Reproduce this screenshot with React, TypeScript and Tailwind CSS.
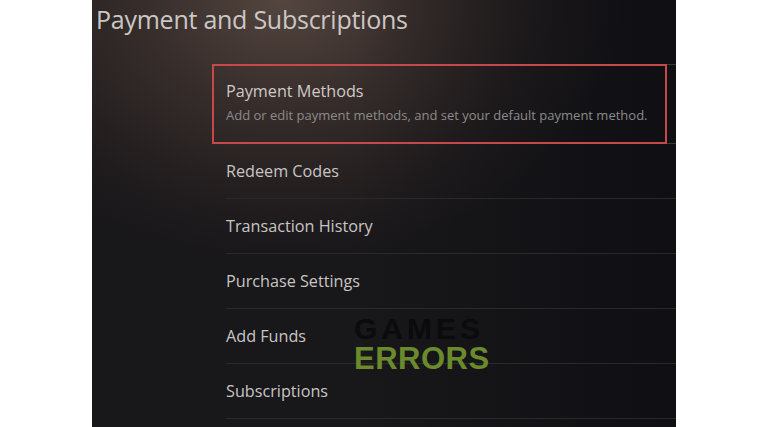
import React from "react";

const rows = ["Redeem Codes", "Transaction History", "Purchase Settings", "Add Funds", "Subscriptions"];

export default function App() {
  return (
    <div className="w-[768px] h-[427px] bg-white flex overflow-hidden" style={{ fontFamily: '"Open Sans", "Noto Sans", sans-serif' }}>
      <div className="ml-[92px] w-[584px] h-[427px] relative overflow-hidden bg-[radial-gradient(ellipse_340px_260px_at_190px_0px,#54453f_0%,#3a302d_35%,#231e1f_75%,#18171a_100%)]">
        <div className="absolute inset-0 bg-[linear-gradient(90deg,rgba(0,0,0,0)_0%,rgba(0,0,0,0)_45%,rgba(8,9,14,0.55)_100%)]" />
        <div className="relative flex flex-col">
          <div className="pl-[4px] pt-[3px] h-[64px] text-[25px] leading-[32px] text-[#cbc7c5] tracking-[-0.25px]">
            Payment and Subscriptions
          </div>
          <div className="ml-[120px] flex flex-col">
            <div className="relative h-[80px]">
              <div className="absolute left-0 top-0 w-[455px] h-[80px] border-2 border-[#c64848] flex flex-col pl-[12px] pt-[13px]">
                <div className="text-[16.2px] leading-[24px] text-[#cfcac8]">Payment Methods</div>
                <div className="text-[13px] leading-[18px] mt-[3px] text-[#8d8a8a]">
                  Add or edit payment methods, and set your default payment method.
                </div>
              </div>
              <div className="absolute left-[455px] right-0 top-0 h-px bg-[#3a3839]" />
              <div className="absolute left-[455px] right-0 bottom-0 h-px bg-[#3a3839]" />
            </div>
            {rows.map((r) => (
              <div key={r} className="ml-[14px] h-[55px] border-b border-[#2b2829] flex items-center text-[16.2px] text-[#c9c5c3]">
                <span className="mt-[1px]">{r}</span>
              </div>
            ))}
          </div>
        </div>
        <div className="absolute left-[262px] top-[314px] flex flex-col font-bold" style={{ fontFamily: '"Liberation Sans", sans-serif' }}>
          <span className="text-[30px] leading-[30px] text-[#0b0a0c] tracking-[4px]">GAMES</span>
          <span className="text-[31px] leading-[30px] text-[#6a8a2c] tracking-[0.5px]">ERRORS</span>
        </div>
      </div>
    </div>
  );
}
